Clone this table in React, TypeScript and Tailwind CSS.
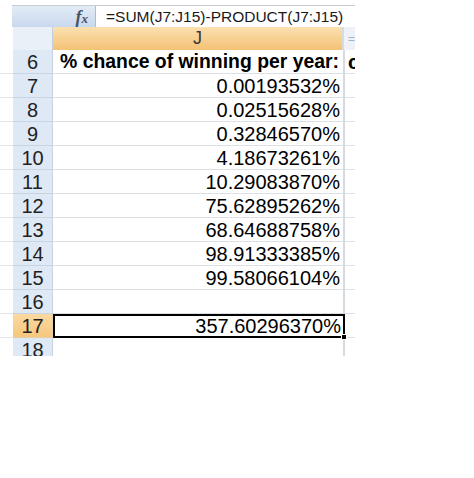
import React from "react"

const ROWS: { n: number; value?: string; bold?: boolean; selected?: boolean }[] = [
  { n: 6, value: "% chance of winning per year:", bold: true },
  { n: 7, value: "0.00193532%" },
  { n: 8, value: "0.02515628%" },
  { n: 9, value: "0.32846570%" },
  { n: 10, value: "4.18673261%" },
  { n: 11, value: "10.29083870%" },
  { n: 12, value: "75.62895262%" },
  { n: 13, value: "68.64688758%" },
  { n: 14, value: "98.91333385%" },
  { n: 15, value: "99.58066104%" },
  { n: 16 },
  { n: 17, value: "357.60296370%", selected: true },
  { n: 18 },
]

function FxIcon() {
  return (
    <span className="font-['Liberation_Serif',serif] text-[18px] italic font-bold leading-none text-[#4a5261]">
      f<span className="text-[13px]">x</span>
    </span>
  )
}

export default function App() {
  return (
    <div className="w-[474px] h-[478px] bg-white font-['Liberation_Sans',Arial,sans-serif]">
      <div className="w-[355px] h-[356px] overflow-hidden">
        {/* top strip */}
        <div className="h-[6px] flex">
          <div className="w-[12px]" />
          <div className="flex-1 border-b border-[#c7cdd5]" />
        </div>

        {/* formula bar */}
        <div className="h-[21px] flex">
          <div className="w-[12px] bg-white" />
          <div className="w-[84px] flex items-center justify-end pr-[7px] bg-gradient-to-b from-[#e3ecf7] to-[#c8d8ec] border-r border-[#aebdd0]">
            <FxIcon />
          </div>
          <div className="flex-1 flex items-center pl-[10px] bg-white text-[15.5px] text-[#1a1a1a] whitespace-nowrap">
            =SUM(J7:J15)-PRODUCT(J7:J15)
          </div>
        </div>

        {/* column headers */}
        <div className="h-[23px] flex">
          <div className="w-[13px] bg-white" />
          <div className="w-[40px] bg-[#eaf0f8] border-r border-[#c3cfdf]" />
          <div className="w-[290px] flex items-center justify-center bg-gradient-to-b from-[#fbe0b0] to-[#f4c274] text-[18px] text-[#3a3a3a]">
            J
          </div>
          <div className="w-[2px] bg-[#d6dbe2]" />
          <div className="flex-1 bg-[#eef2f8] flex items-center pl-[4px] text-[12px] text-[#9fb3cc]">
            =
          </div>
        </div>

        {/* rows */}
        {ROWS.map((row) => (
          <div key={row.n} className="h-[24px] flex">
            <div className="w-[13px] border-b border-[#e2e4e8]" />
            <div
              className={
                row.selected
                  ? "w-[40px] flex items-center justify-center text-[20px] text-[#222] bg-gradient-to-b from-[#fbd9a0] to-[#f6c77d] border-b border-r border-[#e6cfa4]"
                  : "w-[40px] flex items-center justify-center text-[20px] text-[#222] bg-[#dfe8f5] border-b border-r border-[#c8d4e4]"
              }
            >
              {row.n}
            </div>
            <div
              className={
                row.selected
                  ? "relative w-[292px] flex items-center justify-end pr-[2px] border-2 border-black text-[20px] text-black whitespace-nowrap"
                  : row.bold
                    ? "w-[290px] flex items-center pl-[7px] border-b border-[#dcdfe3] text-[19.4px] font-bold text-black whitespace-nowrap overflow-hidden"
                    : "w-[290px] flex items-center justify-end pr-[3px] border-b border-[#dcdfe3] text-[20px] text-black whitespace-nowrap"
              }
            >
              {row.value}
              {row.selected && (
                <div className="absolute right-[-4px] bottom-[-4px] w-[6px] h-[6px] bg-black border border-white" />
              )}
            </div>
            {!row.selected && <div className="w-[2px] bg-[#d6dbe2]" />}
            <div className="flex-1 flex items-center pl-[3px] border-b border-[#dcdfe3] text-[20px] font-bold text-black overflow-hidden whitespace-nowrap">
              {row.bold ? "c" : ""}
            </div>
          </div>
        ))}
      </div>
    </div>
  )
}
